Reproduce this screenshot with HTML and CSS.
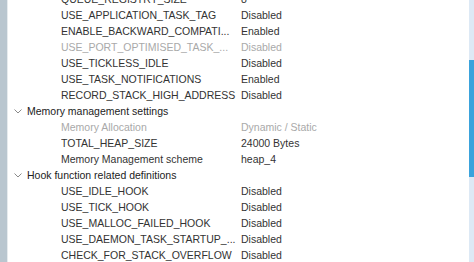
FILE: index.html
```html
<!DOCTYPE html>
<html>
<head>
<meta charset="utf-8">
<link rel="stylesheet" href="styles.css">
</head>
<body>
<div class="frame">
  <div class="strip"></div>
  <div class="main">
    <div class="list">
      <div class="row"><span class="name">QUEUE_REGISTRY_SIZE</span><span class="val">8</span></div>
      <div class="row"><span class="name">USE_APPLICATION_TASK_TAG</span><span class="val">Disabled</span></div>
      <div class="row"><span class="name">ENABLE_BACKWARD_COMPATI...</span><span class="val">Enabled</span></div>
      <div class="row off"><span class="name">USE_PORT_OPTIMISED_TASK_...</span><span class="val">Disabled</span></div>
      <div class="row"><span class="name">USE_TICKLESS_IDLE</span><span class="val">Disabled</span></div>
      <div class="row"><span class="name">USE_TASK_NOTIFICATIONS</span><span class="val">Enabled</span></div>
      <div class="row"><span class="name">RECORD_STACK_HIGH_ADDRESS</span><span class="val">Disabled</span></div>
      <div class="group"><svg class="chev" width="8" height="5" viewBox="0 0 8 5"><path d="M0.5 0.5 L4 4 L7.5 0.5" fill="none" stroke="#8a8a8a" stroke-width="1"/></svg><span>Memory management settings</span></div>
      <div class="row off"><span class="name">Memory Allocation</span><span class="val">Dynamic / Static</span></div>
      <div class="row"><span class="name">TOTAL_HEAP_SIZE</span><span class="val">24000 Bytes</span></div>
      <div class="row"><span class="name">Memory Management scheme</span><span class="val">heap_4</span></div>
      <div class="group"><svg class="chev" width="8" height="5" viewBox="0 0 8 5"><path d="M0.5 0.5 L4 4 L7.5 0.5" fill="none" stroke="#8a8a8a" stroke-width="1"/></svg><span>Hook function related definitions</span></div>
      <div class="row"><span class="name">USE_IDLE_HOOK</span><span class="val">Disabled</span></div>
      <div class="row"><span class="name">USE_TICK_HOOK</span><span class="val">Disabled</span></div>
      <div class="row"><span class="name">USE_MALLOC_FAILED_HOOK</span><span class="val">Disabled</span></div>
      <div class="row"><span class="name">USE_DAEMON_TASK_STARTUP_...</span><span class="val">Disabled</span></div>
      <div class="row"><span class="name">CHECK_FOR_STACK_OVERFLOW</span><span class="val">Disabled</span></div>
    </div>
  </div>
  <div class="scroll"><div class="thumb"></div></div>
</div>
</body>
</html>
```

FILE: styles.css
```css
html, body {
  margin: 0;
  padding: 0;
  background: #ffffff;
}
.frame {
  display: flex;
  width: 474px;
  height: 262px;
  overflow: hidden;
  font-family: "Liberation Sans", Arial, sans-serif;
  font-size: 10.5px;
  color: #333333;
}
.strip {
  width: 7px;
  flex: none;
  background: #b9c6cf;
  border-right: 1px solid #e6ebee;
}
.main {
  flex: 1;
  overflow: hidden;
}
.list {
  margin-top: -9px;
}
.row {
  display: grid;
  grid-template-columns: 176px 1fr;
  column-gap: 4px;
  padding-left: 53px;
  height: 16px;
  line-height: 16px;
  white-space: nowrap;
}
.name {
  overflow: hidden;
}
.off {
  color: #a9a9a9;
}
.group {
  display: flex;
  align-items: center;
  height: 16px;
  line-height: 16px;
  padding-left: 6px;
  color: #222222;
  white-space: nowrap;
}
.chev {
  margin-right: 5px;
  margin-top: 1px;
}
.scroll {
  width: 5px;
  flex: none;
  background: #dde9f5;
  display: flex;
  flex-direction: column;
}
.thumb {
  margin-top: 60px;
  height: 117px;
  background: #3ba3dc;
}
```
